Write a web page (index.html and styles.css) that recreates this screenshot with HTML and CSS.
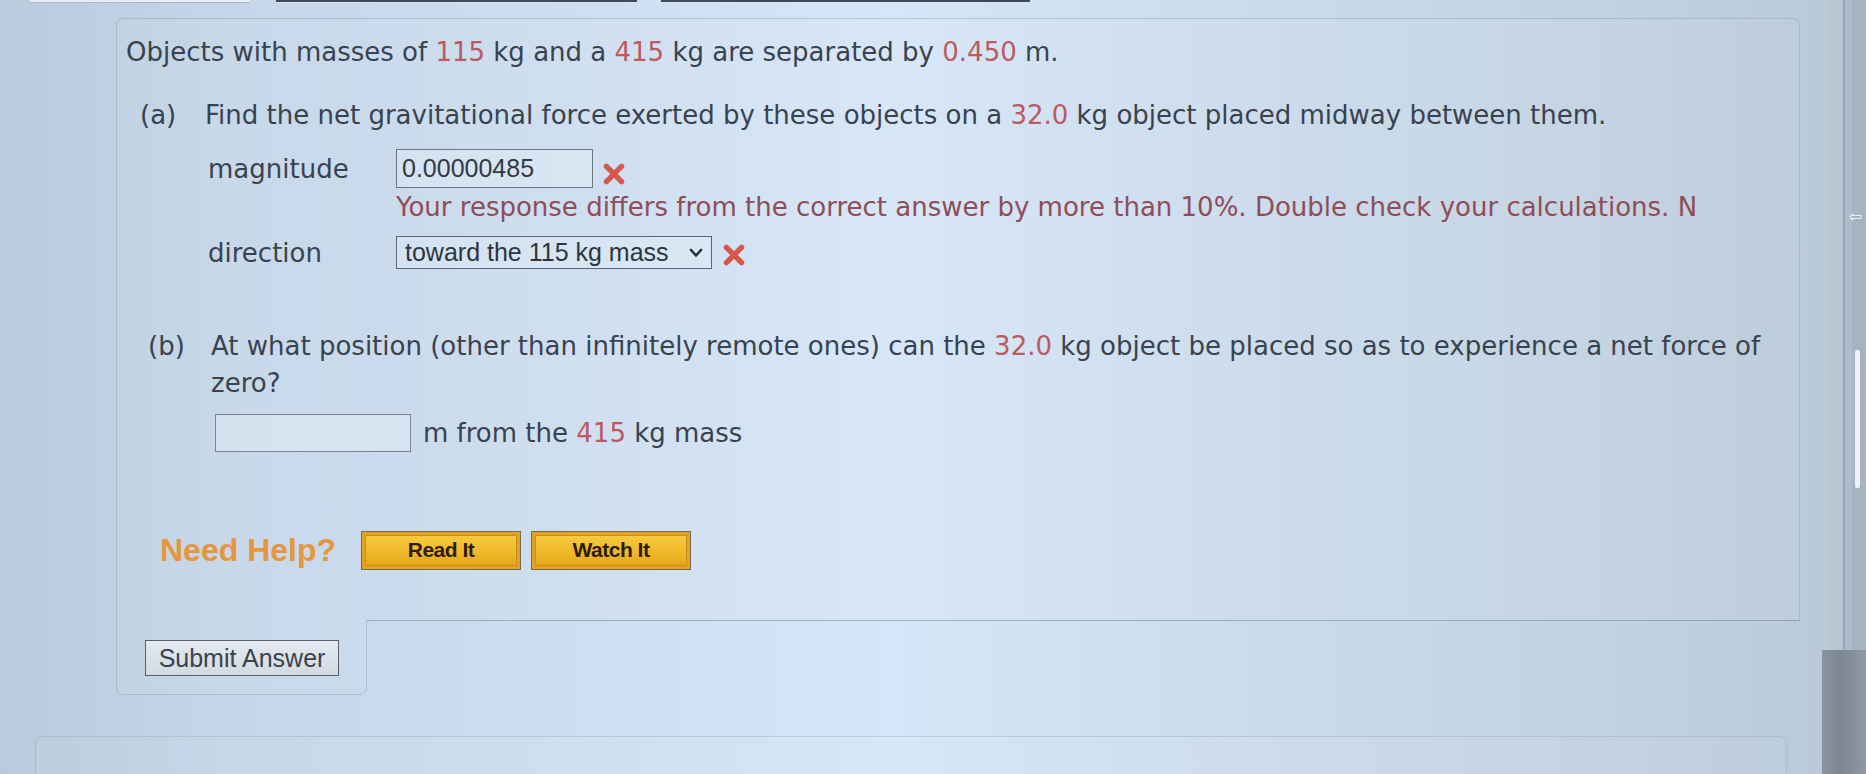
FILE: index.html
```html
<!DOCTYPE html>
<html lang="en">
<head>
<meta charset="utf-8">
<title>Question</title>
<link rel="stylesheet" href="styles.css">
</head>
<body>
<div class="page">
  <div class="main">
    <div class="tabs">
      <span class="tab tab-light"></span>
      <span class="tab tab-dark tab-2"></span>
      <span class="tab tab-dark tab-3"></span>
    </div>
    <div class="qbox">
      <div class="content">
        <p class="stem">Objects with masses of <span class="num">115</span> kg and a <span class="num">415</span> kg are separated by <span class="num">0.450</span> m.</p>

        <div class="part part-a">
          <span class="plabel">(a)</span>
          <div class="pbody">
            <p class="ptext">Find the net gravitational force exerted by these objects on a <span class="num">32.0</span> kg object placed midway between them.</p>
            <div class="arow">
              <span class="alabel">magnitude</span>
              <span class="tbox tbox-mag">0.00000485</span>
              <svg class="xmark xmark-mag" viewBox="0 0 24 24" width="26" height="26"><path d="M5 5 L19 19 M19 5 L5 19" stroke="#d4584c" stroke-width="5" stroke-linecap="round" fill="none"/></svg>
            </div>
            <div class="feedback">Your response differs from the correct answer by more than 10%. Double check your calculations. N</div>
            <div class="arow arow-dir">
              <span class="alabel">direction</span>
              <span class="selectbox">toward the 115 kg mass<svg class="chev" viewBox="0 0 14 10" width="14" height="10"><path d="M2 2 L7 7.5 L12 2" stroke="#2a3038" stroke-width="2.6" fill="none" stroke-linecap="round" stroke-linejoin="round"/></svg></span>
              <svg class="xmark xmark-dir" viewBox="0 0 24 24" width="26" height="26"><path d="M5 5 L19 19 M19 5 L5 19" stroke="#d4584c" stroke-width="5" stroke-linecap="round" fill="none"/></svg>
            </div>
          </div>
        </div>

        <div class="part part-b">
          <span class="plabel">(b)</span>
          <div class="pbody">
            <p class="ptext">At what position (other than infinitely remote ones) can the <span class="num">32.0</span> kg object be placed so as to experience a net force of zero?</p>
            <div class="arow arow-b">
              <span class="tbox tbox-b"></span>
              <span class="unit">m from the <span class="num">415</span> kg mass</span>
            </div>
          </div>
        </div>

        <div class="help">
          <span class="help-title">Need Help?</span>
          <span class="hbtn hbtn-read"><span class="hbtn-inner">Read It</span></span>
          <span class="hbtn hbtn-watch"><span class="hbtn-inner">Watch It</span></span>
        </div>
      </div>
      <div class="foot">
        <div class="submit-area"><span class="submit">Submit Answer</span></div>
        <div class="filler"></div>
      </div>
    </div>
    <div class="nextbox"></div>
  </div>
  <div class="scrollbar">
    <div class="sb-upper">
      <span class="sb-arrow">&#8678;</span>
      <span class="sb-thumb"></span>
    </div>
    <div class="sb-lower"></div>
  </div>
</div>
</body>
</html>
```

FILE: styles.css
```css
* { box-sizing: border-box; }
html, body { margin: 0; padding: 0; }
body {
  width: 1866px;
  height: 774px;
  overflow: hidden;
  font-family: "DejaVu Sans", Verdana, sans-serif;
  color: #3a424e;
  background: linear-gradient(90deg, #b8cadb 0%, #c4d6e8 12%, #cfe0f2 35%, #d5e6f8 48%, #cadbeb 68%, #c0d1e0 88%, #b8c8d6 100%);
}
p { margin: 0; }

.page {
  display: flex;
  height: 774px;
}
.main {
  flex: 1;
  display: flex;
  flex-direction: column;
}

.tabs {
  display: flex;
  height: 3px;
  padding-left: 30px;
}
.tab { display: block; height: 3px; }
.tab-light { width: 220px; background: #e6eef6; border-bottom: 1px solid #aab8c6; }
.tab-dark { background: #3f4b5a; border-bottom: 1px solid #d8e4ef; }
.tab-2 { width: 361px; margin-left: 26px; }
.tab-3 { width: 369px; margin-left: 24px; }

.qbox {
  margin-left: 116px;
  margin-top: 15px;
  width: 1684px;
  display: flex;
  flex-direction: column;
}
.content {
  border: 1px solid rgba(140, 158, 176, 0.45);
  border-bottom: none;
  border-radius: 7px 7px 0 0;
  padding: 18px 0 50px 9px;
  background: rgba(255, 255, 255, 0.05);
}
.stem {
  font-size: 26px;
  line-height: 30px;
}
.num { color: #bc5a5e; }

.part {
  display: flex;
  font-size: 26px;
}
.part-a { margin-top: 30px; }
.part-b { margin-top: 59px; }
.plabel {
  width: 79px;
  padding-left: 14px;
  line-height: 36px;
  flex: none;
}
.part-b .plabel { padding-left: 22px; }
.pbody { flex: 1; }
.ptext { line-height: 37px; }
.part-b .ptext { padding-left: 6px; padding-right: 20px; }

.arow {
  display: flex;
  align-items: center;
  margin-top: 15px;
}
.alabel {
  width: 191px;
  padding-left: 3px;
  flex: none;
}
.tbox {
  display: block;
  border: 1px solid #6c747e;
  background: rgba(236, 242, 248, 0.35);
  font-family: "Liberation Sans", Arial, sans-serif;
  font-size: 25px;
  color: #333a44;
}
.tbox-mag {
  width: 197px;
  height: 39px;
  line-height: 37px;
  padding-left: 5px;
}
.xmark { display: block; flex: none; }
.xmark-mag { margin-left: 8px; margin-top: 10px; }
.feedback {
  margin-top: 4px;
  padding-left: 191px;
  line-height: 30px;
  color: #8e4d58;
}
.arow-dir { margin-top: 14px; }
.selectbox {
  display: flex;
  align-items: center;
  justify-content: space-between;
  width: 316px;
  height: 33px;
  padding: 0 8px 0 8px;
  border: 1px solid #5e6670;
  background: rgba(232, 240, 248, 0.35);
  font-family: "Liberation Sans", Arial, sans-serif;
  font-size: 25px;
  color: #2e353e;
}
.chev { display: block; }
.xmark-dir { margin-left: 9px; margin-top: 4px; }

.arow-b { margin-top: 12px; padding-left: 10px; }
.tbox-b {
  width: 196px;
  height: 38px;
  border-color: #7a828c;
  background: rgba(230, 238, 246, 0.45);
}
.unit {
  margin-left: 12px;
  line-height: 36px;
}

.help {
  display: flex;
  align-items: center;
  margin-top: 78px;
  padding-left: 34px;
  height: 40px;
}
.help-title {
  font-family: "Liberation Sans", Arial, sans-serif;
  font-weight: bold;
  font-size: 32px;
  color: #e6963e;
  width: 201px;
  flex: none;
}
.hbtn {
  display: flex;
  width: 160px;
  height: 39px;
  padding: 3px;
  border: 1px solid #6e6a5e;
  background: #e2a420;
}
.hbtn-watch { margin-left: 10px; }
.hbtn-inner {
  flex: 1;
  display: flex;
  align-items: center;
  justify-content: center;
  border: 1px solid #c8901a;
  background: linear-gradient(180deg, #f6c93e 0%, #f0b82a 55%, #e6a71c 100%);
  font-family: "Liberation Sans", Arial, sans-serif;
  font-weight: bold;
  font-size: 21px;
  color: #2c1d05;
  letter-spacing: -0.5px;
}

.foot {
  display: flex;
  height: 75px;
}
.submit-area {
  width: 251px;
  flex: none;
  border: 1px solid rgba(140, 158, 176, 0.45);
  border-top: none;
  border-radius: 0 0 7px 7px;
  padding: 20px 0 0 28px;
  background: rgba(255, 255, 255, 0.05);
}
.submit {
  display: flex;
  align-items: center;
  justify-content: center;
  width: 194px;
  height: 36px;
  border: 1px solid #59606a;
  background: linear-gradient(180deg, #e4eaf0, #d2dae2);
  font-family: "Liberation Sans", Arial, sans-serif;
  font-size: 25px;
  color: #3b424c;
}
.filler {
  flex: 1;
  border-top: 1px solid rgba(125, 140, 156, 0.6);
}

.nextbox {
  margin-top: 41px;
  margin-left: 35px;
  width: 1752px;
  flex: 1;
  border: 1px solid rgba(140, 158, 176, 0.35);
  border-bottom: none;
  border-radius: 8px 8px 0 0;
  background: rgba(255, 255, 255, 0.04);
}

.scrollbar {
  width: 44px;
  flex: none;
  display: flex;
  flex-direction: column;
}
.sb-upper {
  height: 650px;
  display: flex;
  flex-direction: column;
  align-items: flex-end;
  padding-right: 4px;
  border-right: 14px solid #a6b4c1;
  background: linear-gradient(90deg, #bccbd8 0%, #b4c3d0 70%, #8f9caa 72%, #aebccb 80%);
}
.sb-arrow {
  margin-top: 207px;
  margin-right: -14px;
  font-size: 16px;
  line-height: 20px;
  color: #f4f6f8;
  font-family: "DejaVu Sans", sans-serif;
}
.sb-thumb {
  display: block;
  width: 5px;
  height: 138px;
  margin-top: 123px;
  margin-right: -12px;
  background: #eef2f5;
  border-radius: 2px;
}
.sb-lower {
  flex: 1;
  background: linear-gradient(90deg, #8a95a0 0%, #7b8691 40%, #8e99a4 100%);
}
```
